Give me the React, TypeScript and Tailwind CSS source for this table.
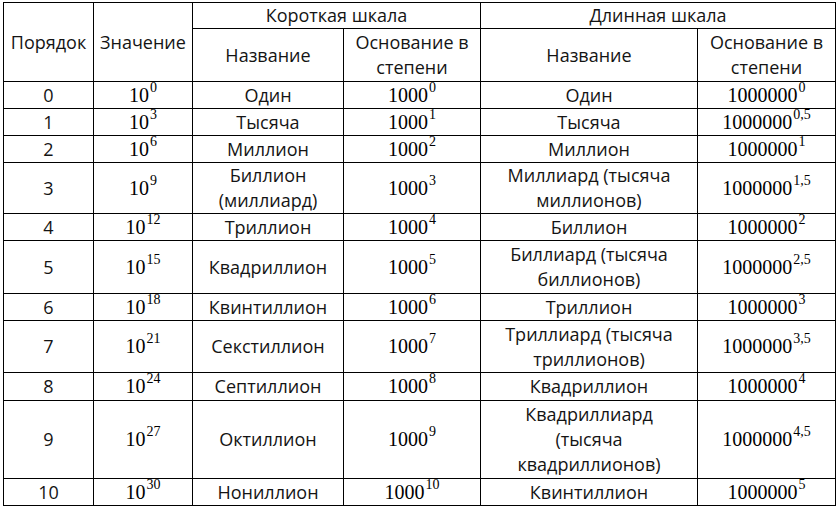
import React from 'react';

type Row = {
  n: string;
  exp: string;
  shortName: React.ReactNode;
  shortExp: string;
  longName: React.ReactNode;
  longExp: string;
  h: string;
};

const rows: Row[] = [
  { n: '0', exp: '0', shortName: 'Один', shortExp: '0', longName: 'Один', longExp: '0', h: 'h-[27px]' },
  { n: '1', exp: '3', shortName: 'Тысяча', shortExp: '1', longName: 'Тысяча', longExp: '0,5', h: 'h-[27px]' },
  { n: '2', exp: '6', shortName: 'Миллион', shortExp: '2', longName: 'Миллион', longExp: '1', h: 'h-[27px]' },
  {
    n: '3',
    exp: '9',
    shortName: (
      <>
        Биллион
        <br />
        (миллиард)
      </>
    ),
    shortExp: '3',
    longName: (
      <>
        Миллиард (тысяча
        <br />
        миллионов)
      </>
    ),
    longExp: '1,5',
    h: 'h-[51px]',
  },
  { n: '4', exp: '12', shortName: 'Триллион', shortExp: '4', longName: 'Биллион', longExp: '2', h: 'h-[27px]' },
  {
    n: '5',
    exp: '15',
    shortName: 'Квадриллион',
    shortExp: '5',
    longName: (
      <>
        Биллиард (тысяча
        <br />
        биллионов)
      </>
    ),
    longExp: '2,5',
    h: 'h-[53px]',
  },
  { n: '6', exp: '18', shortName: 'Квинтиллион', shortExp: '6', longName: 'Триллион', longExp: '3', h: 'h-[27px]' },
  {
    n: '7',
    exp: '21',
    shortName: 'Секстиллион',
    shortExp: '7',
    longName: (
      <>
        Триллиард (тысяча
        <br />
        триллионов)
      </>
    ),
    longExp: '3,5',
    h: 'h-[52px]',
  },
  { n: '8', exp: '24', shortName: 'Септиллион', shortExp: '8', longName: 'Квадриллион', longExp: '4', h: 'h-[28px]' },
  {
    n: '9',
    exp: '27',
    shortName: 'Октиллион',
    shortExp: '9',
    longName: (
      <>
        Квадриллиард
        <br />
        (тысяча
        <br />
        квадриллионов)
      </>
    ),
    longExp: '4,5',
    h: 'h-[78px]',
  },
  { n: '10', exp: '30', shortName: 'Нониллион', shortExp: '10', longName: 'Квинтиллион', longExp: '5', h: 'h-[27px]' },
];

const cell = 'border border-black p-0 text-center align-middle';
const numCell = `${cell} leading-[20px] font-['Liberation_Serif',serif] text-[20px] text-black`;

function Power({ base, exp }: { base: string; exp: string }) {
  return (
    <span className="relative top-[1px]">
      {base}
      <span className="relative -top-[10px] ml-px text-[14px]">{exp}</span>
    </span>
  );
}

export default function App() {
  return (
    <div className="min-h-screen bg-white pl-[3px] pt-[2px] font-['Open_Sans',sans-serif] text-[18px] leading-[25px] text-[#141414]">
      <table className="table-fixed border-collapse">
        <colgroup>
          <col className="w-[90px]" />
          <col className="w-[99px]" />
          <col className="w-[151px]" />
          <col className="w-[137px]" />
          <col className="w-[217px]" />
          <col className="w-[138px]" />
        </colgroup>
        <thead>
          <tr className="h-[26px]">
            <th rowSpan={2} className={`${cell} font-normal`}>
              Порядок
            </th>
            <th rowSpan={2} className={`${cell} font-normal`}>
              Значение
            </th>
            <th colSpan={2} className={`${cell} font-normal`}>
              Короткая шкала
            </th>
            <th colSpan={2} className={`${cell} font-normal`}>
              Длинная шкала
            </th>
          </tr>
          <tr className="h-[53px]">
            <th className={`${cell} font-normal`}>Название</th>
            <th className={`${cell} font-normal`}>
              Основание в
              <br />
              степени
            </th>
            <th className={`${cell} font-normal`}>Название</th>
            <th className={`${cell} font-normal`}>
              Основание в
              <br />
              степени
            </th>
          </tr>
        </thead>
        <tbody>
          {rows.map((r) => (
            <tr key={r.n} className={r.h}>
              <td className={cell}>{r.n}</td>
              <td className={numCell}>
                <Power base="10" exp={r.exp} />
              </td>
              <td className={cell}>{r.shortName}</td>
              <td className={numCell}>
                <Power base="1000" exp={r.shortExp} />
              </td>
              <td className={cell}>{r.longName}</td>
              <td className={numCell}>
                <Power base="1000000" exp={r.longExp} />
              </td>
            </tr>
          ))}
        </tbody>
      </table>
    </div>
  );
}
